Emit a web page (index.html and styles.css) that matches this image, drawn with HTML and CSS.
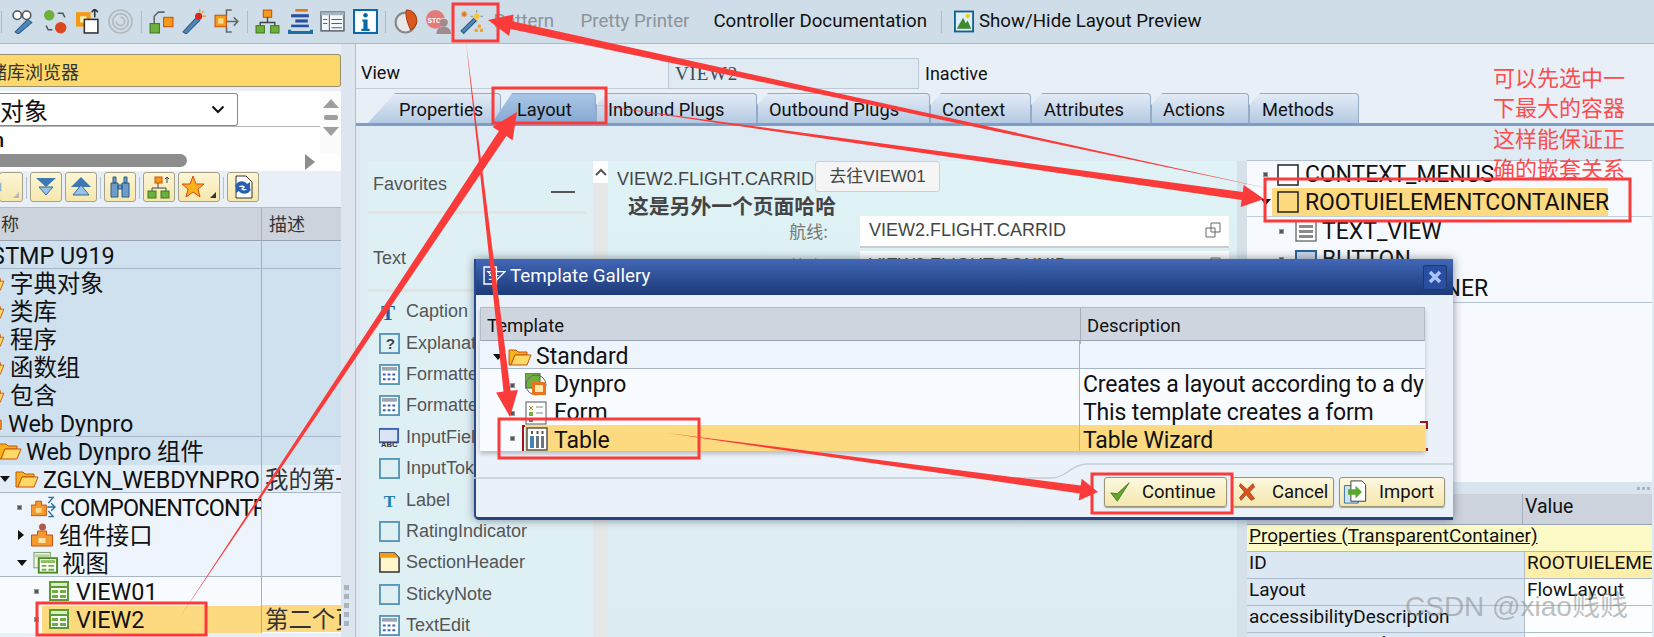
FILE: index.html
```html
<!DOCTYPE html>
<html lang="zh">
<head>
<meta charset="utf-8">
<title>Template Gallery</title>
<link rel="stylesheet" href="styles.css">
</head>
<body>
<svg class="sprite" aria-hidden="true">
  <symbol id="i-view" viewBox="0 0 22 22"><rect x="1" y="1" width="20" height="20" fill="#5a9b32"/><rect x="3" y="3" width="16" height="3" fill="#d9ecc8"/><rect x="3" y="8" width="16" height="11" fill="#fff"/><path d="M4 10h6v3H4zM12 10h6v3h-6zM4 15h6v3H4zM12 15h6v3h-6z" fill="#6fae3c"/></symbol>
  <symbol id="i-views" viewBox="0 0 26 24"><rect x="1" y="1" width="17" height="16" fill="#eef5e6" stroke="#7a9a6a"/><rect x="2" y="3" width="15" height="3" fill="#b9d3a6"/><rect x="6" y="7" width="19" height="15" fill="#fff" stroke="#4f8a2a" stroke-width="2"/><rect x="8" y="9" width="15" height="3" fill="#8cbf5e"/><path d="M9 14h5v2H9zM16 14h6v2h-6zM9 18h5v2H9zM16 18h6v2h-6z" fill="#6fae3c"/></symbol>
  <symbol id="i-folder" viewBox="0 0 24 20"><path d="M1 18V3h7l2 2h9v3H7L3 18z" fill="#f5b21a" stroke="#c9520d"/><path d="M3 18 7 8h16l-4 10z" fill="#ffd966" stroke="#c9520d"/></symbol>
  <symbol id="i-frag" viewBox="0 0 22 22"><path d="M2 8h6V4h6v4h6v10H2z" fill="#f29a2e" stroke="#c9520d"/><rect x="7" y="11" width="7" height="5" fill="#ffd98a"/></symbol>
  <symbol id="i-comp" viewBox="0 0 26 24"><path d="M0 10h5V6h6v4h5v11H0z" fill="#f29a2e" stroke="#c9520d"/><rect x="5" y="13" width="6" height="5" fill="#ffd98a"/><path d="M17 12h8M21 8l4 4-4 4M18 2h5l-5 6M18 22h5l-5-6" fill="none" stroke="#2a6f9c" stroke-width="1.500"/></symbol>
  <symbol id="i-iface" viewBox="0 0 24 24"><path d="M1 12h6V8h9v4h6v11H1z" fill="#f29a2e" stroke="#c9520d"/><rect x="8" y="15" width="7" height="5" fill="#ffe3a6"/><circle cx="12" cy="4" r="3.500" fill="#b05a4a"/></symbol>
  <symbol id="i-box" viewBox="0 0 22 22"><defs><linearGradient id="g-box" x1="0" x2="1"><stop offset="0" stop-color="#fff"/><stop offset="1" stop-color="#dedede"/></linearGradient></defs><rect x="1" y="1" width="20" height="20" fill="url(#g-box)" stroke="#5a97b9" stroke-width="2"/></symbol>
  <symbol id="i-grid" viewBox="0 0 22 22"><rect x="1" y="1" width="20" height="20" fill="#fff" stroke="#5a97b9" stroke-width="2"/><rect x="3" y="3" width="16" height="4" fill="#9aa7b3"/><path d="M4 10h3v2H4zM9 10h3v2H9zM14 10h3v2h-3zM4 15h3v2H4zM9 15h3v2H9zM14 15h3v2h-3z" fill="#3c62b5"/></symbol>
  <symbol id="i-wand" viewBox="0 0 24 24"><path d="M2 21 14 9l2.500 2.500-12 12z" fill="#4f86b8" stroke="#2d5d88"/><circle cx="17" cy="7" r="2.800" fill="#f2c53c"/><path d="M17 1v2.500M17 10.500V13M11 7h2.500M20.500 7H23" stroke="#9aa0a6" stroke-width="1.200"/></symbol>
</svg>

<header class="toolbar">
  <span class="sep sep-first"></span>
  <svg class="tool" viewBox="0 0 24 24"><circle cx="6" cy="6" r="4" fill="#fff" stroke="#555" stroke-width="1.500"/><circle cx="15" cy="6" r="4" fill="#fff" stroke="#555" stroke-width="1.500"/><path d="M4 22 16 10l4 3L7 24z" fill="#4f86b8" stroke="#2d5d88"/></svg>
  <svg class="tool" viewBox="0 0 24 24"><circle cx="6" cy="6" r="5" fill="#6fb03c"/><circle cx="17" cy="18" r="5.500" fill="#d9481e"/><path d="M14 4h5l2 4M9 20H5l-2-4" fill="none" stroke="#555" stroke-width="1.500"/></svg>
  <svg class="tool" viewBox="0 0 24 24"><rect x="0" y="3" width="14" height="14" fill="#f59a16"/><rect x="4" y="7" width="6" height="6" fill="#fff0b0"/><rect x="8" y="10" width="13" height="13" fill="#fff" stroke="#333" stroke-width="1.500"/><path d="M18 0v8M15 3l3-3 3 3" fill="none" stroke="#333" stroke-width="1.500"/></svg>
  <svg class="tool" viewBox="0 0 24 24" fill="none" stroke="#b4b8bc" stroke-width="1.600"><circle cx="12" cy="12" r="11"/><circle cx="12" cy="12" r="7.500"/><path d="M12 8a4 4 0 1 1-4 4"/></svg>
  <span class="sep"></span>
  <svg class="tool" viewBox="0 0 24 24"><rect x="1" y="14" width="9" height="9" fill="#6fb03c" stroke="#3d7a1e"/><rect x="14" y="8" width="9" height="9" fill="#f59a16" stroke="#c9520d"/><path d="M5 14V7l4-4h6" fill="none" stroke="#666" stroke-width="1.500"/></svg>
  <svg class="tool" viewBox="0 0 24 24"><path d="M1 22 14 8l3 3L4 24z" fill="#4f86b8" stroke="#2d5d88"/><circle cx="16" cy="7" r="3.500" fill="#d9261e"/><path d="M17 0v3M23 7h-3M21 2l-2 2" stroke="#f2a51c" stroke-width="1.400"/></svg>
  <svg class="tool" viewBox="0 0 24 24"><rect x="1" y="6" width="11" height="11" fill="#f59a16" stroke="#c9520d"/><rect x="4" y="9" width="5" height="5" fill="#ffe08a"/><path d="M12 12h11M19 8l4 4-4 4M12 6V1h5M12 17v5h5" fill="none" stroke="#666" stroke-width="1.500"/></svg>
  <span class="sep"></span>
  <svg class="tool" viewBox="0 0 24 24"><rect x="8" y="1" width="8" height="7" fill="#f59a16" stroke="#c9520d"/><path d="M12 8v5M5 17v-4h14v4" fill="none" stroke="#444" stroke-width="1.300"/><rect x="1" y="16" width="8" height="7" fill="#6fb03c" stroke="#3d7a1e"/><rect x="15" y="16" width="8" height="7" fill="#6fb03c" stroke="#3d7a1e"/></svg>
  <svg class="tool" viewBox="0 0 24 24"><rect x="7" y="0" width="12" height="2.500" fill="#e0761e"/><rect x="3" y="5" width="17" height="3" fill="#2a4f9c"/><rect x="7" y="10" width="12" height="3" fill="#2a4f9c"/><rect x="3" y="15" width="17" height="2.500" fill="#2a4f9c"/><path d="M0 24v-4h3v1h18v-1h3v4z" fill="#1f6fa0"/></svg>
  <svg class="tool" viewBox="0 0 24 24"><rect x="1" y="3" width="22" height="18" fill="#f5f8fb" stroke="#55606c" stroke-width="1.400"/><rect x="1" y="3" width="22" height="3" fill="#a7b4c2"/><path d="M9 6v15M3 10h4M3 14h4M11 10h10M11 14h10M11 18h10" stroke="#55606c"/></svg>
  <svg class="tool" viewBox="0 0 24 24"><rect x="1" y="1" width="22" height="22" fill="#fff" stroke="#0a6aa8" stroke-width="2"/><circle cx="12" cy="6" r="2.200" fill="#0a6aa8"/><path d="M9 10h5v9h2v2H8v-2h2v-7H9z" fill="#0a6aa8"/></svg>
  <span class="sep"></span>
  <svg class="tool" viewBox="0 0 24 24"><circle cx="11" cy="13" r="9.500" fill="#e8e8e8" stroke="#888" stroke-width="2"/><path d="M12 1c6 0 10 5 10 10 0 4-3 8-6 9-2-4-6-14-4-19z" fill="#d9581e" stroke="#a33d10"/></svg>
  <svg class="tool" viewBox="0 0 24 24"><circle cx="9" cy="10" r="9" fill="#e57a7a"/><text x="1.500" y="13" class="stop-text">STOP</text><circle cx="17" cy="13" r="4" fill="#a08c8c"/><path d="M10 24c0-5 3-7 7-7s7 2 7 7z" fill="#a08c8c"/></svg>
  <svg class="tool tool-tight" viewBox="0 0 24 24"><use href="#i-wand"/><path d="M2 5h6M5 2v6M3 3l4 4M7 3 3 7" stroke="#e0761e"/><rect x="18" y="15" width="3" height="3" fill="#f5a21a"/><rect x="20" y="19" width="3" height="3" fill="#f5a21a"/><rect x="15" y="19" width="3" height="3" fill="#f5a21a"/></svg>
  <span class="tool-text tool-text-off tool-pattern">Pattern</span>
  <span class="tool-text tool-text-off">Pretty Printer</span>
  <span class="tool-text tool-controller">Controller Documentation</span>
  <span class="sep sep-preview"></span>
  <svg class="tool tool-preview" viewBox="0 0 22 24"><rect x="1" y="1" width="20" height="22" fill="#dff0fa" stroke="#0f5f8f" stroke-width="2"/><path d="M3 20 10 8l3 6 2-3 4 9z" fill="#3f8a2e"/><circle cx="15" cy="6" r="2.500" fill="#f5d21a"/></svg>
  <span class="tool-text">Show/Hide Layout Preview</span>
</header>

<main class="workspace">
  <aside class="browser">
    <div class="browser-title"><span class="clip-title">储库浏览器</span></div>
    <div class="picker">
      <div class="picker-fields">
        <div class="select"><span class="clip-select">地对象</span><svg class="chevron" viewBox="0 0 14 9"><path d="M1.500 1.500 7 7l5.500-5.500" fill="none" stroke="#111" stroke-width="2"/></svg></div>
        <div class="picker-name"><span class="clip-name">n</span></div>
      </div>
      <div class="picker-scroll">
        <i class="arrow-up"></i><i class="arrow-bar"></i><i class="arrow-down"></i>
      </div>
    </div>
    <div class="hscroll"><span class="hscroll-thumb"></span><i class="arrow-right"></i></div>
    <div class="btnrow">
      <span class="ybtn ybtn-a"><svg viewBox="0 0 20 20"><path d="M2 10l7-7v14z" fill="#8db0d2"/></svg><i class="corner corner-dim"></i></span>
      <span class="bdiv"></span>
      <span class="ybtn"><svg viewBox="0 0 24 24"><path d="M2 3h20l-10 9z" fill="#3e78b2"/><path d="M5 12h14l-7 8z" fill="#9bc1e3" stroke="#2e6a9e"/></svg></span>
      <span class="ybtn"><svg viewBox="0 0 24 24"><path d="M12 2 22 12H2z" fill="#3e78b2"/><path d="M12 10l8 10H4z" fill="#9bc1e3" stroke="#2e6a9e"/></svg></span>
      <span class="bdiv"></span>
      <span class="ybtn"><svg viewBox="0 0 24 24"><path d="M3 8h7v14H3zM14 8h7v14h-7zM5 2h3v6H5zM16 2h3v6h-3zM10 10h4v4h-4z" fill="#6d9cc8" stroke="#2d5d88"/></svg></span>
      <span class="bdiv"></span>
      <span class="ybtn"><svg viewBox="0 0 24 24"><rect x="8" y="2" width="7" height="6" fill="#f59a16" stroke="#c9520d"/><path d="M11 8v5M5 16v-3h14v3" fill="none" stroke="#444"/><rect x="1" y="16" width="8" height="7" fill="#6fb03c" stroke="#3d7a1e"/><rect x="14" y="16" width="8" height="7" fill="#6fb03c" stroke="#3d7a1e"/><path d="M20 8V2M18 4l2-2 2 2" fill="none" stroke="#444"/></svg></span>
      <span class="ybtn ybtn-b"><svg viewBox="0 0 24 24"><path d="M12 1l3 8h8l-6 5 2 8-7-5-7 5 2-8-6-5h8z" fill="#f9b31a" stroke="#d9481e"/></svg><i class="corner"></i></span>
      <span class="bdiv"></span>
      <span class="ybtn"><svg viewBox="0 0 24 24"><path d="M5 1h10l6 6v16H5z" fill="#fff" stroke="#333"/><path d="M4 11c2-6 10-6 12-2l3-2v7h-7l2-2c-2-2-5-2-7 1zM20 14c-2 6-10 6-12 2l-3 2v-6h7l-2 2c2 2 5 2 7-1z" fill="#2a5fb0"/></svg></span>
    </div>
    <div class="tree">
      <div class="tree-head"><div class="tree-cell"><span class="clip-head">名称</span></div><div class="tree-cell">描述</div></div>
      <div class="tree-row tone-a rule"><div class="tree-cell"><span class="clip-tmp">$TMP U919</span></div><div class="tree-cell"></div></div>
      <div class="tree-row tone-a"><div class="tree-cell"><svg class="ic clip-folder"><use href="#i-folder"/></svg><span class="name-obj">字典对象</span></div><div class="tree-cell"></div></div>
      <div class="tree-row tone-a"><div class="tree-cell"><svg class="ic clip-folder"><use href="#i-folder"/></svg><span class="name-obj">类库</span></div><div class="tree-cell"></div></div>
      <div class="tree-row tone-a"><div class="tree-cell"><svg class="ic clip-folder"><use href="#i-folder"/></svg><span class="name-obj">程序</span></div><div class="tree-cell"></div></div>
      <div class="tree-row tone-a"><div class="tree-cell"><svg class="ic clip-folder"><use href="#i-folder"/></svg><span class="name-obj">函数组</span></div><div class="tree-cell"></div></div>
      <div class="tree-row tone-a"><div class="tree-cell"><svg class="ic clip-folder"><use href="#i-folder"/></svg><span class="name-obj">包含</span></div><div class="tree-cell"></div></div>
      <div class="tree-row tone-a rule"><div class="tree-cell"><svg class="ic clip-frag"><use href="#i-frag"/></svg><span class="name-obj">Web Dynpro</span></div><div class="tree-cell"></div></div>
      <div class="tree-row tone-a"><div class="tree-cell"><svg class="ic ic-folder clip-open"><use href="#i-folder"/></svg><span class="name-comp">Web Dynpro 组件</span></div><div class="tree-cell"></div></div>
      <div class="tree-row tone-b rule"><div class="tree-cell"><i class="tw tw-down"></i><svg class="ic ic-folder ic-zg"><use href="#i-folder"/></svg><span class="name-zg">ZGLYN_WEBDYNPRO</span></div><div class="tree-cell desc">我的第一</div></div>
      <div class="tree-row tone-c"><div class="tree-cell lvl-3"><i class="dot"></i><svg class="ic ic-wide"><use href="#i-comp"/></svg><span class="name-cc">COMPONENTCONTROLLER</span></div><div class="tree-cell"></div></div>
      <div class="tree-row tone-c"><div class="tree-cell lvl-3"><i class="tw tw-right"></i><svg class="ic ic-wide"><use href="#i-iface"/></svg><span>组件接口</span></div><div class="tree-cell"></div></div>
      <div class="tree-row tone-c rule"><div class="tree-cell lvl-3"><i class="tw tw-down"></i><svg class="ic ic-wide"><use href="#i-views"/></svg><span>视图</span></div><div class="tree-cell"></div></div>
      <div class="tree-row tone-d"><div class="tree-cell lvl-4"><i class="dot"></i><svg class="ic"><use href="#i-view"/></svg><span>VIEW01</span></div><div class="tree-cell"></div></div>
      <div class="tree-row tone-d"><div class="tree-cell lvl-4"><i class="dot"></i><span class="hl"><svg class="ic"><use href="#i-view"/></svg><span>VIEW2</span></span></div><div class="tree-cell desc hl-cell">第二个页面</div></div>
    </div>
  </aside>

  <div class="gutter"><span class="grip"><i></i><i></i><i></i><i></i><i></i></span></div>

  <section class="editor">
    <div class="view-head">
      <span class="view-label">View</span>
      <span class="view-input">VIEW2</span>
      <span class="view-state">Inactive</span>
    </div>
    <nav class="tabs">
      <span class="tab tab-first">Properties</span>
      <span class="tab tab-on">Layout</span>
      <span class="tab tab-in">Inbound Plugs</span>
      <span class="tab tab-out">Outbound Plugs</span>
      <span class="tab tab-ctx">Context</span>
      <span class="tab tab-att">Attributes</span>
      <span class="tab tab-act">Actions</span>
      <span class="tab tab-met">Methods</span>
    </nav>
    <div class="panel">
      <div class="palette">
        <div class="pal-head"><span>Favorites</span><b class="pal-dash"></b></div>
        <div class="pal-head pal-head-text"><span>Text</span></div>
        <ul class="pal-list">
          <li><svg class="pal-ic" viewBox="0 0 22 22"><text x="2" y="20" class="big-t">T</text></svg>Caption</li>
          <li><svg class="pal-ic" viewBox="0 0 22 22"><use href="#i-box"/><text x="7" y="17" class="q-mark">?</text></svg>Explanation</li>
          <li><svg class="pal-ic"><use href="#i-grid"/></svg>FormattedTextEdit</li>
          <li><svg class="pal-ic"><use href="#i-grid"/></svg>FormattedTextView</li>
          <li><svg class="pal-ic" viewBox="0 0 22 22"><rect x="0" y="2" width="20" height="14" fill="#dbe4f5" stroke="#3c62b5" stroke-width="2"/><text x="2" y="21" class="abc">ABC</text></svg>InputField</li>
          <li><svg class="pal-ic"><use href="#i-box"/></svg>InputTokenizer</li>
          <li><svg class="pal-ic" viewBox="0 0 22 22"><text x="5" y="18" class="small-t">T</text></svg>Label</li>
          <li><svg class="pal-ic"><use href="#i-box"/></svg>RatingIndicator</li>
          <li><svg class="pal-ic" viewBox="0 0 22 22"><path d="M1 1h15l5 5v15H1z" fill="#fff6cc" stroke="#333" stroke-width="1.600"/><path d="M1 1h15l5 5H1z" fill="#f59a16"/></svg>SectionHeader</li>
          <li><svg class="pal-ic"><use href="#i-box"/></svg>StickyNote</li>
          <li><svg class="pal-ic"><use href="#i-grid"/></svg>TextEdit</li>
        </ul>
      </div>
      <div class="vscroll"><i class="vscroll-up"><svg viewBox="0 0 12 8"><path d="M1 7l5-5 5 5" fill="none" stroke="#555" stroke-width="2"/></svg></i></div>
      <div class="canvas">
        <div class="cv-top"><span class="cv-bound">VIEW2.FLIGHT.CARRID</span><span class="cv-btn">去往VIEW01</span></div>
        <h2 class="cv-title">这是另外一个页面哈哈</h2>
        <div class="cv-field"><label>航线:</label><span class="cv-input">VIEW2.FLIGHT.CARRID<svg class="cv-copy" viewBox="0 0 16 16"><path d="M6 1h9v9H6z M1 6h9v9H1z" fill="none" stroke="#666"/></svg></span></div>
        <div class="cv-field"><label>航班:</label><span class="cv-input">VIEW2.FLIGHT.CONNID<svg class="cv-copy" viewBox="0 0 16 16"><path d="M6 1h9v9H6z M1 6h9v9H1z" fill="none" stroke="#666"/></svg></span></div>
      </div>
      <div class="side-gutter"></div>
      <div class="side">
        <div class="side-tree">
          <div class="st-row st-context"><i class="dot"></i><svg class="st-ic" viewBox="0 0 22 22"><rect x="1" y="1" width="20" height="20" fill="#fff" stroke="#222" stroke-width="1.500"/></svg><span>CONTEXT_MENUS</span></div>
          <div class="st-row st-root"><i class="tw tw-down"></i><span class="hl st-hl"><svg class="st-ic" viewBox="0 0 22 22"><rect x="1" y="1" width="20" height="20" fill="none" stroke="#222" stroke-width="1.500"/></svg><span>ROOTUIELEMENTCONTAINER</span></span></div>
          <div class="st-row st-child"><i class="dot"></i><svg class="st-ic" viewBox="0 0 22 22"><rect x="1" y="1" width="20" height="20" fill="#fff" stroke="#777" stroke-width="1.500"/><path d="M4 5h14v3H4zM4 10h14v3H4zM4 15h14v3H4z" fill="#8a8a8a"/></svg><span>TEXT_VIEW</span></div>
          <div class="st-row st-child"><i class="dot"></i><svg class="st-ic" viewBox="0 0 22 22"><rect x="1" y="3" width="20" height="16" fill="#c9d6e8" stroke="#2a5f9c" stroke-width="2"/></svg><span>BUTTON</span></div>
          <div class="st-row st-child st-last"><span>UI_CONTAINER</span></div>
        </div>
        <div class="side-split"><span class="side-dots"></span></div>
        <div class="props">
          <div class="pr-head"><span>Property</span><span>Value</span></div>
          <div class="pr-group"><u>Properties (TransparentContainer)</u></div>
          <div class="pr-row"><span>ID</span><span class="pr-val pr-key">ROOTUIELEMENTCONTAINER</span></div>
          <div class="pr-row"><span>Layout</span><span class="pr-val">FlowLayout</span></div>
          <div class="pr-row"><span>accessibilityDescription</span><span class="pr-val"></span></div>
          <div class="pr-row"><span>contextMenuBehaviour</span><span class="pr-val">N</span></div>
        </div>
      </div>
    </div>
  </section>
</main>

<div class="dialog">
  <div class="dlg-title">
    <svg class="dlg-ic" viewBox="0 0 24 20"><path d="M1 1h13v18H1z" fill="none" stroke="#fff" stroke-width="1.500"/><path d="M5 6h18l-9 9zM6 10h10M6 14h6" fill="none" stroke="#fff" stroke-width="1.300"/></svg>
    <span class="dlg-name">Template Gallery</span>
    <span class="dlg-close"><svg viewBox="0 0 14 14"><path d="M2 2l10 10M12 2 2 12" stroke="#a9c4ff" stroke-width="3.500"/></svg></span>
  </div>
  <div class="dlg-body">
    <div class="dt">
      <div class="dt-head"><div class="dt-c1">Template</div><div class="dt-c2">Description</div></div>
      <div class="dt-row dt-top"><div class="dt-c1 dt-std"><i class="tw tw-down"></i><svg class="dt-folder"><use href="#i-folder"/></svg>Standard</div><div class="dt-c2"></div></div>
      <div class="dt-row"><div class="dt-c1 dt-item"><i class="dot"></i><svg class="dt-ic" viewBox="0 0 22 24"><rect x="0" y="0" width="15" height="15" fill="#6fb03c" stroke="#3d7a1e"/><circle cx="11" cy="12" r="10" fill="none" stroke="#666"/><rect x="7" y="9" width="14" height="13" fill="#e8741e"/><rect x="10" y="12" width="8" height="7" fill="#ffe9b0"/></svg>Dynpro</div><div class="dt-c2">Creates a layout according to a dynamic</div></div>
      <div class="dt-row"><div class="dt-c1 dt-item"><i class="dot"></i><svg class="dt-ic" viewBox="0 0 22 24"><rect x="1" y="1" width="20" height="22" fill="#fff" stroke="#555"/><path d="M4 5l4 4M8 5l-4 4" stroke="#b8860b"/><rect x="4" y="11" width="4" height="4" fill="#6fb03c"/><rect x="4" y="17" width="4" height="4" fill="#2a7fb8"/><path d="M11 6h7M11 12h7M11 18h7" stroke="#888"/></svg>Form</div><div class="dt-c2">This template creates a form</div></div>
      <div class="dt-row dt-sel"><div class="dt-c1 dt-item"><i class="dot"></i><span class="focus-l"></span><span class="dt-selhl"><svg class="dt-ic" viewBox="0 0 22 24"><rect x="1" y="1" width="20" height="22" fill="#fff" stroke="#555" stroke-width="1.500"/><path d="M4 9h4v12H4z" fill="#3f86b8"/><path d="M10 9h3v12h-3zM15 9h3v12h-3z" fill="#6d7580"/><path d="M5 4h2v3H5zM10.500 4h2v3h-2zM15.500 4h2v3h-2z" fill="#555"/></svg>Table</span></div><div class="dt-c2 dt-sel2">Table Wizard</div></div>
    </div>
    <span class="focus-rt"></span><span class="focus-rb"></span>
    <svg class="dlg-curve" viewBox="0 0 979 20" preserveAspectRatio="none"><path d="M0 16H578c14 0 20-14 34-14H979" fill="none" stroke="#c3ccd6" stroke-width="1.500"/></svg>
    <div class="dlg-foot">
      <span class="dbtn dbtn-c"><svg class="dbtn-ic" viewBox="0 0 24 24"><path d="M2 13l7 9L22 2 9 14z" fill="#64a72c" stroke="#3d7a1e"/></svg>Continue</span>
      <span class="dbtn dbtn-x"><svg class="dbtn-ic" viewBox="0 0 24 24"><path d="M4 2l8 7 7-7 2 4-6 6 6 8-4 2-6-7-6 7-2-3 6-7-6-7z" fill="#d8541e" stroke="#a33d10"/></svg>Cancel</span>
      <span class="dbtn dbtn-i"><svg class="dbtn-ic" viewBox="0 0 26 26"><path d="M1 6h15v19H1z" fill="#cfe2f2" stroke="#2a6f9c"/><path d="M8 1h12l4 4v18H8z" fill="#fff" stroke="#333"/><path d="M5 10h8V6l7 7-7 7v-4H5z" fill="#58a82c"/></svg>Import</span>
    </div>
  </div>
</div>

<svg class="marks" viewBox="0 0 1654 637">
  <g class="box">
    <rect x="453" y="4" width="45" height="37"/>
    <rect x="493" y="88" width="113" height="35"/>
    <rect x="37" y="603" width="169" height="32"/>
    <rect x="1265" y="179" width="365" height="42"/>
    <rect x="499" y="419" width="200" height="39"/>
    <rect x="1092" y="474" width="140" height="39"/>
  </g>
  <g class="arrow">
    <polygon points="1275,190 512.300,21.200 513.700,14.400 488,20 509.100,35.900 510.500,29"/>
    <polygon points="589,104 1242.800,192 1243.700,185 1264,199 1240.700,207 1241.600,200"/>
    <polygon points="180,617 498.900,131.100 492.600,126.900 517,112 512.600,140.300 506.300,136.100"/>
    <polygon points="466,42 510.500,390.800 517.900,389.900 510,417 496.100,392.500 503.500,391.600"/>
    <polygon points="667,433 1080.700,485.600 1081.700,478.700 1098,492 1078.700,500.500 1079.700,493.600"/>
  </g>
</svg>

<p class="note">可以先选中一<br>下最大的容器<br>这样能保证正<br>确的嵌套关系</p>
<div class="watermark">CSDN @xiao贱贱</div>
</body>
</html>
```
FILE: styles.css
```css
* { box-sizing: border-box; }
html, body { margin: 0; padding: 0; }
body {
  position: relative;
  width: 1654px;
  height: 637px;
  overflow: hidden;
  background: #e8eff7;
  font-family: Roboto, "Noto Sans CJK SC", sans-serif;
  color: #111;
}
.sprite { display: none; }
i { display: block; font-style: normal; }

/* toolbar */
.toolbar {
  height: 44px;
  background: #cfdde8;
  border-bottom: 1px solid #a9bccd;
  display: flex;
  align-items: center;
  font-size: 18.700px;
}
.tool { width: 25px; height: 25px; flex: none; margin-left: 7.500px; }
.tool-tight { margin-right: 3px; }
.tool-preview { margin-left: 12px; width: 20px; }
.sep { width: 1px; height: 22px; background: #a9bccd; margin-left: 7.500px; flex: none; }
.sep-first { margin-left: 1px; margin-right: 1px; }
.sep-preview { margin-left: 14px; }
.tool-text { margin-left: 5px; white-space: nowrap; padding-bottom: 2px; }
.tool-text-off { color: #8e9399; }
.tool-pattern { margin-left: 7px; width: 79px; }
.tool-text-off + .tool-text-off { margin-left: 8px; }
.tool-controller { margin-left: 24px; }

.stop-text { font: bold 6.500px "Liberation Sans", sans-serif; fill: #fff; }

/* workspace */
.workspace {
  height: 593px;
  display: grid;
  grid-template-columns: 341px 15px 1fr;
}

/* left browser */
.browser { padding-top: 10px; overflow: hidden; }
.browser-title {
  height: 33px;
  background: #fdd86a;
  border: 1px solid #9a8f6f;
  border-left: 0;
  border-radius: 0 3px 3px 0;
  display: flex;
  align-items: center;
  font-size: 18px;
  color: #333;
  overflow: hidden;
}
.clip-title { margin-left: -11px; white-space: nowrap; }
.picker { display: flex; height: 63px; margin-top: 4px; background: #fff; }
.picker-fields { flex: 1; min-width: 0; }
.select {
  width: 238px;
  height: 33px;
  margin-top: 2px;
  background: #fff;
  border: 1px solid #8a8a8a;
  border-left: 0;
  border-radius: 0 3px 3px 0;
  display: flex;
  align-items: center;
  justify-content: space-between;
  padding-right: 12px;
  font-size: 24px;
  overflow: hidden;
}
.clip-select { margin-left: -24px; white-space: nowrap; }
.chevron { width: 14px; height: 9px; }
.picker-name { border-top: 1px solid #b5b5b5; height: 27px; font-size: 20px; line-height: 26px; overflow: hidden; }
.clip-name { margin-left: -7px; font-weight: 500; }
.picker-scroll { width: 21px; display: flex; flex-direction: column; align-items: center; padding-top: 8px; background: #fbfbfb; }
.arrow-up { width: 0; border: 8px solid transparent; border-top: 0; border-bottom: 9px solid #9e9e9e; }
.arrow-bar { width: 14px; height: 5px; border-radius: 2px; background: #9e9e9e; margin: 7px 0; }
.arrow-down { width: 0; border: 8px solid transparent; border-bottom: 0; border-top: 9px solid #9e9e9e; }
.hscroll {
  height: 17px;
  background: #fff;
  display: flex;
  justify-content: space-between;
  padding-right: 26px;
}
.hscroll-thumb { width: 187px; height: 13px; background: #8d8d8d; border-radius: 0 7px 7px 0; }
.arrow-right { width: 0; height: 0; border: 8px solid transparent; border-right: 0; border-left: 10px solid #8d8d8d; }
.btnrow { height: 36px; padding-top: 1px; display: flex; align-items: flex-start; gap: 3px; }
.ybtn {
  position: relative;
  width: 32px;
  height: 30px;
  background: linear-gradient(#fdf6d6, #f5e7ae);
  border: 1px solid #a6a289;
  border-radius: 3px;
  display: flex;
  align-items: center;
  justify-content: center;
  flex: none;
}
.ybtn svg { width: 24px; height: 24px; }
.ybtn-a { width: 24px; margin-left: -1px; justify-content: flex-start; }
.ybtn-a svg { width: 14px; height: 18px; margin-left: -5px; }
.ybtn-b { width: 42px; justify-content: flex-start; padding-left: 2px; }
.corner { position: absolute; right: 3px; bottom: 3px; width: 0; border: 3px solid #333; border-top-color: transparent; border-left-color: transparent; }
.corner-dim { border-right-color: #b9b9b9; border-bottom-color: #b9b9b9; }
.bdiv { width: 1px; height: 22px; background: #b6c1cd; margin-top: 5px; flex: none; }

.tree { font-size: 23.400px; }
.tree-head, .tree-row { display: grid; grid-template-columns: 262px 79px; }
.tree-head {
  height: 34px;
  background: #cdd3dc;
  border-top: 1px solid #b4bcc7;
  border-bottom: 1px solid #98a4b1;
  font-size: 18px;
  line-height: 33px;
  color: #333;
}
.tree-head .tree-cell { padding-left: 7px; }
.tree-head .tree-cell:first-child { padding-left: 0; }
.clip-head { margin-left: -17px; }
.tree-row { height: 28px; line-height: 28px; }
.tree-cell {
  border-right: 1px solid #9fb0c0;
  overflow: hidden;
  white-space: nowrap;
  display: flex;
  align-items: center;
  height: 100%;
}
.tree-cell:last-child { border-right: 0; }
.tree-row .tree-cell span { padding-top: 2px; }
.tree-row .tree-cell .hl { padding-top: 0; }
.rule { border-bottom: 1px solid #a8b7c7; }
.tone-a { background: #cfe0ef; }
.tone-b { background: #e3edf8; }
.tone-c { background: #eef4fb; }
.tone-d { background: #f8fbff; }
.clip-tmp { margin-left: -8px; }
.ic { width: 22px; height: 22px; flex: none; }
.clip-folder { margin-left: -17px; width: 22px; height: 18px; }
.clip-frag { margin-left: -17px; width: 20px; }
.name-obj { margin-left: 5px; }
.ic-folder { width: 24px; height: 20px; }
.clip-open { margin-left: -2px; }
.name-comp { margin-left: 4px; }
.ic-zg { margin-left: 5px; }
.name-zg { margin-left: 4px; letter-spacing: -.25px; }
.name-cc { letter-spacing: -.9px; }
.desc { padding-left: 3px; padding-top: 2px; color: #333; }
.lvl-3 { padding-left: 17px; }
.lvl-3 .ic-wide { width: 25px; height: 24px; margin-left: 9px; margin-right: 4px; }
.lvl-3 .tw + .ic-wide { margin-left: 6px; }
.lvl-4 { padding-left: 34px; }
.lvl-4 .ic { margin-left: 9px; margin-right: 6px; }
.hl { display: flex; align-items: center; flex: 1; background: #fdd97f; height: 27px; }
.lvl-4 .hl { margin-left: 3px; }
.lvl-4 .hl .ic { margin-left: 6px; }
.hl-cell { background: #fdd97f; height: 27px; }

.dot { width: 5px; height: 5px; background: #555; box-shadow: inset 0 0 0 1px #999; flex: none; }
.tw { width: 0; height: 0; flex: none; }
.tw-down { border: 5px solid transparent; border-bottom: 0; border-top: 6px solid #111; }
.tw-right { border: 5px solid transparent; border-right: 0; border-left: 6px solid #111; margin-left: 1px; }

.gutter { background: #dde6ef; border-right: 1px solid #a8c0d8; }
.grip { display: flex; flex-direction: column; gap: 4px; padding: 541px 0 0 3px; }
.grip i { width: 5px; height: 5px; background: #a9b4be; }

/* editor */
.editor { display: flex; flex-direction: column; min-width: 0; }
.view-head { height: 49px; display: flex; align-items: center; font-size: 18px; padding-top: 9px; }
.view-label { width: 312px; height: 31px; border-bottom: 1px solid #c3ccd6; line-height: 30px; padding-left: 5px; }
.view-input {
  width: 251px;
  height: 31px;
  background: #dfeaf3;
  border: 1px solid #bcc8d3;
  font: 19px "Liberation Serif", serif;
  line-height: 30px;
  letter-spacing: .8px;
  color: #3d4b58;
  padding-left: 6px;
}
.view-state { margin-left: 6px; }
.tabs { height: 30px; display: flex; padding-left: 12px; font-size: 18.300px; }
.tab {
  height: 30px;
  line-height: 31px;
  background: linear-gradient(#e2ebf6, #b4cae2);
  border: 1px solid #93abc6;
  border-bottom: 0;
  border-radius: 0 4px 0 0;
  white-space: nowrap;
  flex: none;
  padding-left: 11px;
  clip-path: polygon(0 12px, 11px 0, 100% 0, 100% 100%, 0 100%);
}
.tab-first { width: 133px; padding-left: 31px; clip-path: polygon(0 100%, 27px 0, 100% 0, 100% 100%); border-left: 0; }
.tab-on {
  width: 104px;
  margin-left: -9px;
  padding-left: 24px;
  background: linear-gradient(#a9c6e6, #86a9d3);
  clip-path: polygon(0 100%, 20px 0, 100% 0, 100% 100%);
}
.tab-in { width: 161px; }
.tab-out { width: 173px; }
.tab-ctx { width: 101px; }
.tab-att { width: 120px; padding-left: 12px; }
.tab-act { width: 98px; }
.tab-met { width: 110px; padding-left: 12px; }
.panel {
  flex: 1;
  min-height: 0;
  display: flex;
  padding: 35px 2px 0 12px;
  background: #deebf5;
  border-top: 3px solid #7d9fc7;
}
.palette { width: 225px; background: #dff0f5; font: 18px "Liberation Sans", sans-serif; color: #555; overflow: hidden; flex: none; }
.pal-head { height: 53px; padding: 13px 0 0 5px; border-bottom: 3px solid #e3e3e1; display: flex; justify-content: space-between; width: 219px; line-height: 21px; }
.pal-head-text { height: 78px; padding-top: 34px; }
.pal-dash { width: 24px; height: 2px; background: #555; margin: 17px 12px 0 0; }
.pal-list { list-style: none; margin: 4px 0 0; padding: 0 0 0 11px; }
.pal-list li { height: 31.400px; display: flex; align-items: center; gap: 6px; white-space: nowrap; }
.pal-ic { width: 21px; height: 21px; flex: none; }
.big-t { font: bold 22px "Liberation Serif", serif; fill: #1f5fa8; }
.small-t { font: bold 18px "Liberation Serif", serif; fill: #1f7fb0; }
.q-mark { font: bold 16px "Liberation Sans", sans-serif; fill: #444; }
.abc { font: bold 8px "Liberation Sans", sans-serif; fill: #333; }
.vscroll { width: 15px; background: #e6e8e8; flex: none; }
.vscroll-up { height: 22px; background: #fff; display: flex; align-items: center; justify-content: center; }
.vscroll-up svg { width: 12px; height: 8px; }
.canvas {
  width: 629px;
  flex: none;
  background: linear-gradient(#dff2f5, #dcebf2);
  padding: 0 0 0 9px;
  font: 16px "Liberation Sans", sans-serif;
  color: #444;
  overflow: hidden;
}
.cv-top { display: flex; align-items: center; height: 31px; white-space: nowrap; }
.cv-bound { font-size: 18px; padding-top: 5px; }
.cv-btn {
  margin-left: 1px;
  width: 125px;
  height: 31px;
  background: #f5f5f5;
  border: 1px solid #cfcfcf;
  border-radius: 3px;
  line-height: 29px;
  text-align: center;
  font-family: "Liberation Sans", "Noto Sans CJK SC", sans-serif;
  font-size: 17px;
}
.cv-title {
  margin: 1px 0 0 11px;
  height: 24px;
  font: bold 20.800px/24px "Noto Sans CJK SC", sans-serif;
  color: #444;
}
.cv-field { display: flex; height: 35px; margin-top: -6px; }
.cv-field + .cv-field { margin-top: 0; }
.cv-field label { width: 243px; text-align: right; padding: 7px 32px 0 0; font: 17px "Noto Sans CJK SC", sans-serif; color: #777; }
.cv-input {
  width: 369px;
  height: 32px;
  margin-top: 5px;
  background: #fff;
  border-bottom: 2px solid #ccc;
  padding: 4px 0 0 9px;
  display: flex;
  justify-content: space-between;
  font-size: 18px;
}
.cv-copy { width: 16px; height: 16px; margin: 2px 8px 0 0; }
.side-gutter { width: 10px; background: #d5e0e8; flex: none; }
.side { flex: 1; min-width: 0; display: flex; flex-direction: column; background: #f6f9fd; margin-top: -1px; border-top: 1px solid #b6c3d0; font-size: 23px; overflow: hidden; }
.side-tree { height: 321px; }
.st-row { height: 28px; display: flex; align-items: center; white-space: nowrap; padding-left: 16px; }
.st-ic { width: 22px; height: 22px; margin-right: 6px; flex: none; }
.st-row > .st-ic { margin-left: 9px; }
.st-context { height: 27px; letter-spacing: -.1px; }
.st-root { height: 29px; border-bottom: 1px solid #c3cfdb; padding-left: 14px; }
.st-hl { flex: none; width: 336px; margin-left: 1px; padding-left: 5px; letter-spacing: -.1px; height: 28px; }
.st-child { padding-left: 32px; height: 28px; }
.st-child > .st-ic { margin-left: 11px; margin-right: 5px; }
.st-last { padding-left: 85px; border-bottom: 1px solid #b6c3d0; height: 29px; margin-top: 1px; }
.side-split { height: 12px; background: #d9e4ee; display: flex; justify-content: flex-end; }
.side-dots { width: 15px; height: 3px; margin-top: 5px; background: repeating-linear-gradient(90deg, #a9b4be 0 3px, transparent 3px 5px); }
.props { font-size: 19px; }
.pr-head, .pr-row { display: grid; grid-template-columns: 275px 1fr; }
.pr-head { height: 31px; background: #cdd3dc; line-height: 26px; border-bottom: 1px solid #98a4b1; font-size: 19.500px; }
.pr-head span + span { border-left: 1px solid #a5afba; padding-left: 2px; }
.pr-group { height: 27px; background: #fcfbc8; line-height: 22px; padding-left: 2px; border-bottom: 1px solid #aebccb; }
.pr-row { height: 27px; line-height: 22px; background: #dbe7f3; border-bottom: 1px solid #aebccb; padding-left: 2px; white-space: nowrap; }
.pr-val { background: #fbfdff; border-left: 1px solid #aebccb; padding-left: 2px; overflow: hidden; }
.pr-key { background: #fdeeaa; }

/* dialog */
.dialog {
  position: absolute;
  left: 474px;
  top: 259px;
  width: 979px;
  height: 261px;
  display: flex;
  flex-direction: column;
  background: #ebf1f8;
  border-left: 2px solid #274a8c;
  border-bottom: 3px solid #23447f;
  border-radius: 0 0 0 5px;
  box-shadow: 0 0 10px rgba(60, 70, 80, .6);
  z-index: 5;
}
.dlg-title {
  height: 36px;
  flex: none;
  background: linear-gradient(#4267b6, #1b3a78);
  display: flex;
  align-items: center;
  padding: 0 6px 0 7px;
  color: #fff;
  font-size: 18.800px;
}
.dlg-name { flex: 1; padding-bottom: 3px; }
.dlg-ic { width: 23px; height: 19px; margin-right: 4px; flex: none; margin-bottom: 3px; }
.dlg-close { width: 24px; height: 25px; background: #2a4fa0; border: 1px solid #1c3a76; border-radius: 2px; display: flex; align-items: center; justify-content: center; }
.dlg-close svg { width: 14px; height: 14px; }
.dlg-body { flex: 1; min-height: 0; position: relative; display: flex; flex-direction: column; padding: 12px 0 0 4px; }
.dt { width: 945px; height: 144px; flex: none; overflow: hidden; font-size: 23px; box-shadow: 0 3px 4px rgba(90,100,110,.35); }
.dt-head, .dt-row { display: grid; grid-template-columns: 600px 345px; }
.dt-head { height: 34px; background: #cfd5de; border: 1px solid #b4bcc7; border-bottom-color: #98a4b1; font-size: 18.500px; line-height: 36px; }
.dt-head .dt-c1 { padding-left: 6px; border-right: 1px solid #a5afba; }
.dt-head .dt-c2 { padding-left: 6px; }
.dt-row { height: 28px; line-height: 28px; background: #f8fbff; }
.dt-top { background: #edf4fc; border-bottom: 1px solid #a8b7c7; }
.dt-c1 { border-right: 1px solid #a8b7c7; display: flex; align-items: center; white-space: nowrap; }
.dt-row .dt-c1 { padding-top: 2px; }
.dt-row .dt-c2 { padding: 2px 0 0 3px; overflow: hidden; white-space: nowrap; letter-spacing: -.15px; }
.dt-std { padding-left: 13px; }
.dt-folder { width: 24px; height: 20px; margin-left: 5px; margin-right: 4px; }
.dt-item { padding-left: 30px; }
.dt-ic { width: 22px; height: 24px; margin: 0 7px 0 10px; flex: none; }
.dt-selhl { display: flex; align-items: center; flex: 1; background: #fdd97f; height: 26px; margin-top: -2px; padding-top: 6px; }
.dt-selhl .dt-ic { margin: -4px 6px 0 1px; }
.dt-sel { height: 26px; }
.dt-sel .dot { margin-right: 7px; margin-top: -2px; }
.focus-l { width: 3px; height: 26px; border-top: 2px solid #a31414; border-left: 2px solid #a31414; margin-top: -2px; flex: none; }
.dt-sel2 { background: #fdd97f; }
.focus-rt { position: absolute; left: 944px; top: 126px; width: 8px; height: 8px; border-top: 2px solid #a31414; border-right: 2px solid #a31414; }
.focus-rb { position: absolute; left: 950px; top: 153px; width: 2px; height: 3px; background: #a31414; }
.dlg-curve { position: absolute; left: -2px; top: 167px; width: 979px; height: 20px; }
.dlg-foot { margin-top: auto; padding: 0 8px 10px 0; display: flex; justify-content: flex-end; gap: 5px; font-size: 18.500px; position: relative; }
.dbtn {
  height: 30px;
  display: flex;
  align-items: center;
  background: linear-gradient(#fdf8e0, #f5e7ae);
  border: 1px solid #9a9577;
  border-radius: 3px;
  box-shadow: 0 1px 1px rgba(80,80,60,.5);
}
.dbtn-c { width: 123px; padding-left: 4px; }
.dbtn-x { width: 102px; padding-left: 4px; }
.dbtn-i { width: 106px; padding-left: 3px; }
.dbtn-ic { width: 22px; height: 24px; margin-right: 11px; flex: none; }
.dbtn-x .dbtn-ic { width: 20px; margin-right: 15px; }
.dbtn-i .dbtn-ic { width: 25px; margin-right: 11px; }

/* red annotation layer */
.marks { position: absolute; left: 0; top: 0; width: 1654px; height: 637px; z-index: 10; pointer-events: none; }
.box rect { fill: none; stroke: #fb3a3a; stroke-width: 3; }
.arrow polygon { fill: #fb3a3a; }
.note {
  position: absolute;
  left: 1493px;
  top: 61px;
  margin: 0;
  font: 22px/30.300px "Noto Sans CJK SC", sans-serif;
  color: #fb4d4d;
  z-index: 11;
}
.watermark {
  position: absolute;
  left: 1405px;
  top: 590px;
  font: 28px/34px "Liberation Sans", "Noto Sans CJK SC", sans-serif;
  color: rgba(130, 130, 130, .5);
  z-index: 11;
  white-space: nowrap;
}
```
